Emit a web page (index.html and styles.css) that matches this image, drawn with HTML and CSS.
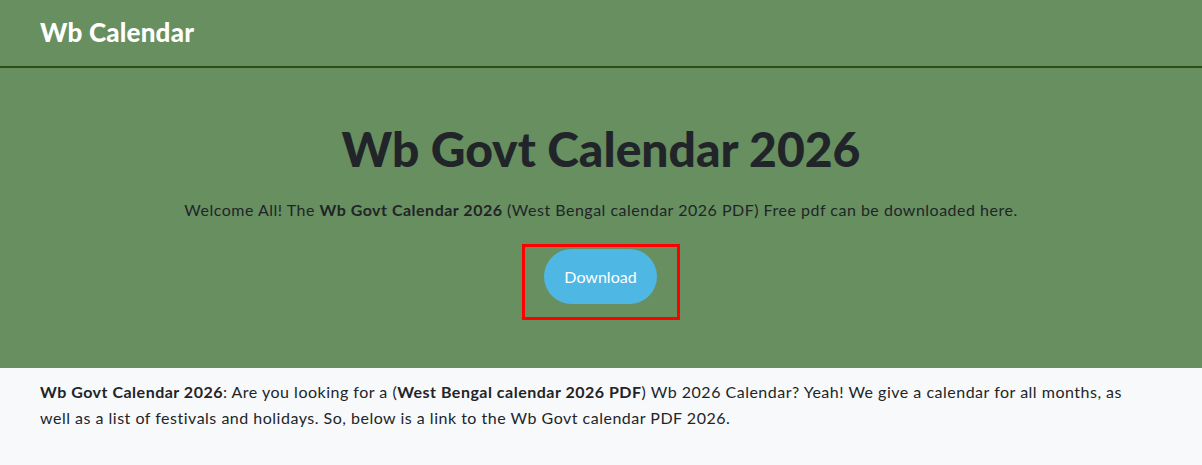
FILE: index.html
```html
<!DOCTYPE html>
<html lang="en">
<head>
  <meta charset="UTF-8">
  <meta name="viewport" content="width=device-width, initial-scale=1.0">
  <title>Wb Calendar</title>
  <link rel="stylesheet" href="styles.css">
</head>
<body>

  <header class="topbar">
    <a class="brand" href="#">Wb Calendar</a>
  </header>

  <section class="hero">
    <h1 class="hero-title">Wb Govt Calendar 2026</h1>
    <p class="hero-text">Welcome All! The <strong>Wb Govt Calendar 2026</strong> (West Bengal calendar 2026 PDF) Free pdf can be downloaded here.</p>
    <div class="download-box">
      <a class="download-btn" href="#">Download</a>
    </div>
  </section>

  <main class="content">
    <p><strong>Wb Govt Calendar 2026</strong>: Are you looking for a (<strong>West Bengal calendar 2026 PDF</strong>) Wb 2026 Calendar? Yeah! We give a calendar for all months, as well as a list of festivals and holidays. So, below is a link to the Wb Govt calendar PDF 2026.</p>
  </main>

</body>
</html>
```

FILE: styles.css
```css
body {
  font-family: 'Lato', sans-serif;
  background-color: #f8f9fa;
  color: #212529;
  margin: 0;
}
.topbar {
  background-color: #678f60;
  height: 66px;
  border-bottom: 2px solid #2c4f18;
  display: flex;
  align-items: center;
  padding: 0 40px;
}
.brand {
  color: #fff;
  font-size: 26px;
  font-weight: 900;
  letter-spacing: 0.2px;
  text-decoration: none;
  margin-top: -3px;
}
.hero {
  background-color: #678f60;
  text-align: center;
  padding: 52px 40px 48px;
}
.hero-title {
  font-size: 48px;
  font-weight: 900;
  margin: 0 0 22px;
  line-height: 1.2;
}
.hero-text {
  font-size: 16px;
  letter-spacing: 0.5px;
  margin: 0 0 25px;
}
.download-box {
  display: inline-flex;
  border: 3px solid #f00;
  padding: 2px 20px 13px 19px;
}
.download-btn {
  display: block;
  background-color: #4fb7e4;
  color: #fff;
  font-size: 16px;
  line-height: 19px;
  text-decoration: none;
  padding: 18px 20px;
  border-radius: 28px;
}
.content {
  padding: 11px 50px 8px 40px;
}
.content p {
  font-size: 16px;
  line-height: 26px;
  letter-spacing: 0.5px;
  margin: 0;
}
```
